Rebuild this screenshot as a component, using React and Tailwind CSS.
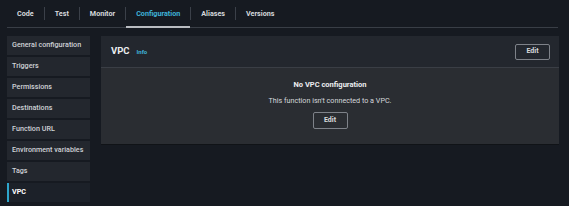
import React from "react";

const tabs = ["Code", "Test", "Monitor", "Configuration", "Aliases", "Versions"];

const sideItems = [
  "General configuration",
  "Triggers",
  "Permissions",
  "Destinations",
  "Function URL",
  "Environment variables",
  "Tags",
  "VPC",
];

const font = { fontFamily: 'Roboto, "Open Sans", sans-serif' };

const App = () => {
  const active = "Configuration";
  const activeSide = "VPC";

  return (
    <div className="w-[569px] h-[206px] overflow-hidden bg-[#161a21] pl-[7px] pr-[10px]" style={font}>
      {/* Tabs */}
      <div className="flex items-stretch h-[28px] border-b border-[#393e46] mr-px">
        {tabs.map((tab, i) => (
          <React.Fragment key={tab}>
            {i > 0 && <div className="w-px bg-[#3b4049] my-[7px]" />}
            <div
              className={`relative px-[10px] pt-px flex items-center text-[7.2px] font-bold ${
                tab === active ? "text-[#3fb3d8]" : "text-[#d5d8dc]"
              }`}
            >
              {tab}
              {tab === active && (
                <span className="absolute left-0 right-0 -bottom-px h-[2px] bg-[#b9bcc1]" />
              )}
            </div>
          </React.Fragment>
        ))}
      </div>

      <div className="flex gap-[11px] mt-[8px]">
        {/* Sidebar */}
        <div className="w-[83px] flex flex-col gap-[2px] shrink-0">
          {sideItems.map((item) => (
            <div
              key={item}
              className={`relative h-[19px] flex items-center pl-[5px] text-[7.2px] whitespace-nowrap ${
                item === activeSide ? "bg-[#1c2129] text-white font-bold" : "bg-[#23272e] text-[#cfd2d6] font-medium"
              }`}
            >
              {item === activeSide && <span className="absolute left-0 top-0 bottom-0 w-[2px] bg-[#2ea6cc]" />}
              {item}
            </div>
          ))}
        </div>

        {/* Panel */}
        <div className="flex-1 self-start shadow-[0_1px_0_#101317]">
          <div className="h-[32px] bg-[#23272e] border-b border-[#3a3e45] flex items-center justify-between pl-[10px] pr-[9px]">
            <div className="flex items-baseline gap-[7px]">
              <span className="text-[9.5px] font-bold text-[#eceef0]">VPC</span>
              <span className="text-[6px] font-bold text-[#3fb3d8]">Info</span>
            </div>
            <button className="w-[35px] h-[16px] border border-[#7e8289] rounded-[2px] text-[7px] font-bold text-[#d8dadd] flex items-center justify-center">
              Edit
            </button>
          </div>
          <div className="bg-[#2a2d32] h-[76px] flex flex-col items-center pt-[12px]">
            <div className="text-[7.5px] font-bold text-[#eceef0] leading-[10px]">No VPC configuration</div>
            <div className="text-[7.2px] text-[#d5d8dc] leading-[10px] mt-[6px]">This function isn't connected to a VPC.</div>
            <button className="mt-[6px] w-[35px] h-[17px] border border-[#7e8289] rounded-[2px] text-[7px] font-bold text-[#d8dadd] flex items-center justify-center">
              Edit
            </button>
          </div>
        </div>
      </div>
    </div>
  );
};

export default App;
